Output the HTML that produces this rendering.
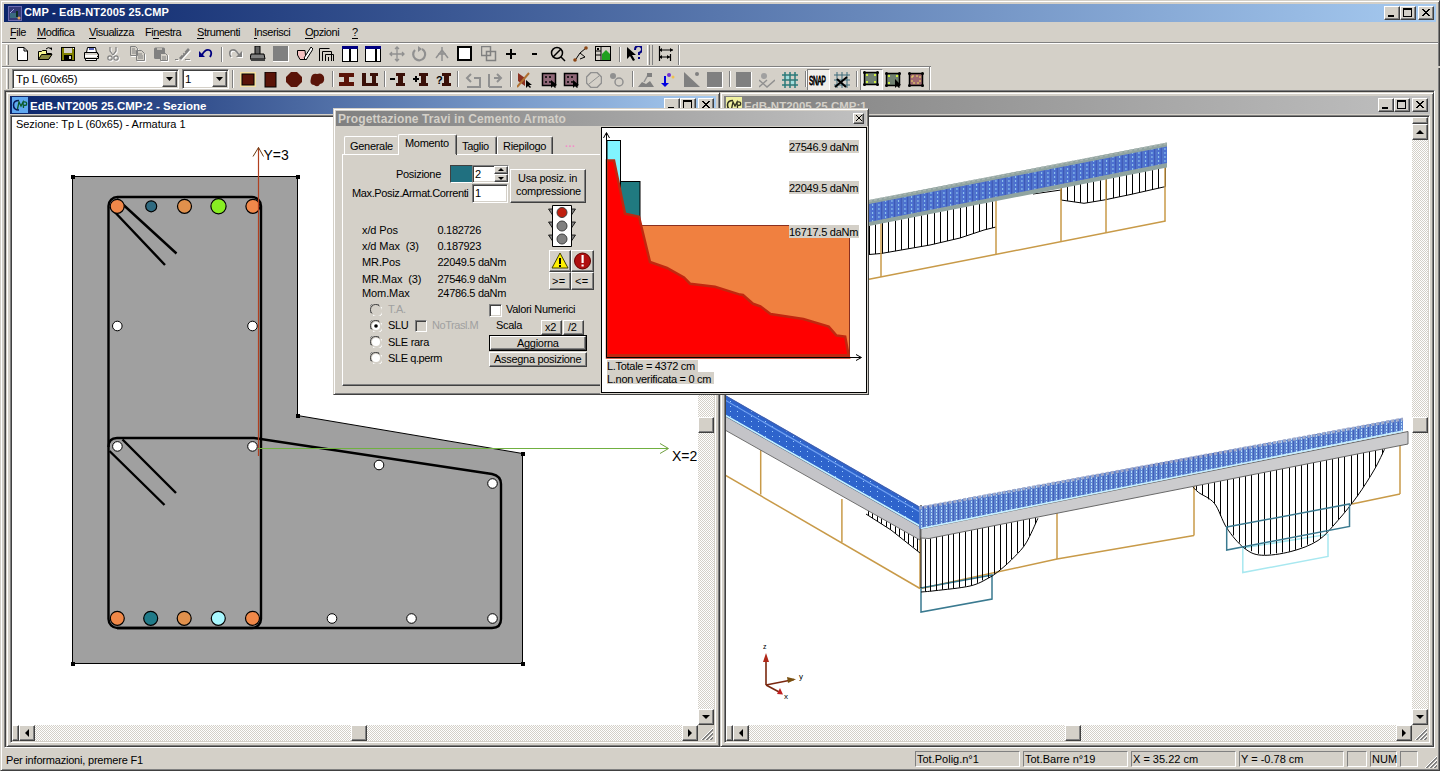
<!DOCTYPE html>
<html><head><meta charset="utf-8">
<style>
*{box-sizing:border-box;margin:0;padding:0}
html,body{width:1440px;height:771px;overflow:hidden;background:#D4D0C8;font-family:"Liberation Sans",sans-serif;font-size:11px;color:#000;position:relative}
.a{position:absolute;display:block}
.t{position:absolute;white-space:nowrap;line-height:13px;font-size:11px;letter-spacing:-0.2px}
.rb{background:#D4D0C8;border:1px solid;border-color:#fff #404040 #404040 #fff;box-shadow:inset -1px -1px #808080}
.rbp{background:#D4D0C8;border:1px solid;border-color:#D4D0C8 #404040 #404040 #D4D0C8;box-shadow:inset 1px 1px #fff,inset -1px -1px #808080}
.sk{border:1px solid;border-color:#808080 #fff #fff #808080;box-shadow:inset 1px 1px #404040,inset -1px -1px #D4D0C8}
.chk{background-image:repeating-conic-gradient(#D4D0C8 0 25%,#fff 0 50%);background-size:2px 2px}
.tb{background:linear-gradient(to right,#0A246A,#A6CAF0)}
.ti{background:linear-gradient(to right,#808080,#C0C0C0)}
u{text-decoration:none;border-bottom:1px solid #000;}
</style></head><body>
<div class="a" style="left:0px;top:0px;width:1440px;height:771px;background:#D4D0C8;border:1px solid;border-color:#D4D0C8 #404040 #404040 #D4D0C8;box-shadow:inset 1px 1px #fff,inset -1px -1px #808080"></div><div class="a" style="left:4px;top:4px;width:1432px;height:18px;background:linear-gradient(to right,#0A246A,#A6CAF0)"></div><svg class="a" style="left:6px;top:5px;" width="16" height="16" viewBox="0 0 16 16"><rect x="2.5" y="1.5" width="13" height="14" fill="#343A78" stroke="#6A6AB0"/><path d="M4 8L8 4" stroke="#A0A0E0"/><rect x="4" y="8" width="8" height="5" fill="#3A6A80"/><path d="M11 6V12" stroke="#103020" stroke-width="2"/><circle cx="13" cy="13" r="1.5" fill="#E0A060"/></svg><div class="t" style="left:24px;top:6px;color:#fff;font-weight:bold;letter-spacing:0.15px">CMP - EdB-NT2005 25.CMP</div><div class="a rb" style="left:1384px;top:6px;width:16px;height:14px;"></div><div class="a" style="left:1388px;top:15px;width:6px;height:2px;background:#000"></div><div class="a rb" style="left:1400px;top:6px;width:16px;height:14px;"></div><svg class="a" style="left:1403px;top:8px;" width="9" height="9" viewBox="0 0 9 9"><rect x="0.5" y="1.5" width="8" height="7" fill="none" stroke="#000"/><rect x="0" y="0" width="9" height="2" fill="#000"/></svg><div class="a rb" style="left:1418px;top:6px;width:16px;height:14px;"></div><svg class="a" style="left:1422px;top:9px;" width="8" height="7" viewBox="0 0 8 7"><g fill="#000" shape-rendering="crispEdges"><rect x="0" y="0" width="1" height="1"/><rect x="1" y="0" width="1" height="1"/><rect x="6" y="0" width="1" height="1"/><rect x="7" y="0" width="1" height="1"/><rect x="1" y="1" width="1" height="1"/><rect x="2" y="1" width="1" height="1"/><rect x="5" y="1" width="1" height="1"/><rect x="6" y="1" width="1" height="1"/><rect x="2" y="2" width="1" height="1"/><rect x="3" y="2" width="1" height="1"/><rect x="4" y="2" width="1" height="1"/><rect x="5" y="2" width="1" height="1"/><rect x="3" y="3" width="1" height="1"/><rect x="4" y="3" width="1" height="1"/><rect x="2" y="4" width="1" height="1"/><rect x="3" y="4" width="1" height="1"/><rect x="4" y="4" width="1" height="1"/><rect x="5" y="4" width="1" height="1"/><rect x="1" y="5" width="1" height="1"/><rect x="2" y="5" width="1" height="1"/><rect x="5" y="5" width="1" height="1"/><rect x="6" y="5" width="1" height="1"/><rect x="0" y="6" width="1" height="1"/><rect x="1" y="6" width="1" height="1"/><rect x="6" y="6" width="1" height="1"/><rect x="7" y="6" width="1" height="1"/></g></svg><div class="t" style="left:10px;top:26px;letter-spacing:-0.45px;line-height:12px"><u>F</u>ile</div><div class="t" style="left:37px;top:26px;letter-spacing:-0.45px;line-height:12px"><u>M</u>odifica</div><div class="t" style="left:89px;top:26px;letter-spacing:-0.45px;line-height:12px"><u>V</u>isualizza</div><div class="t" style="left:145px;top:26px;letter-spacing:-0.45px;line-height:12px">Fi<u>n</u>estra</div><div class="t" style="left:197px;top:26px;letter-spacing:-0.45px;line-height:12px"><u>S</u>trumenti</div><div class="t" style="left:254px;top:26px;letter-spacing:-0.45px;line-height:12px"><u>I</u>nserisci</div><div class="t" style="left:305px;top:26px;letter-spacing:-0.45px;line-height:12px"><u>O</u>pzioni</div><div class="t" style="left:352px;top:26px;letter-spacing:-0.45px;line-height:12px"><u>?</u></div><div class="a" style="left:2px;top:42px;width:1436px;height:1px;background:#808080"></div><div class="a" style="left:2px;top:43px;width:1436px;height:1px;background:#fff"></div><div class="a" style="left:2px;top:66px;width:1436px;height:1px;background:#808080"></div><div class="a" style="left:2px;top:67px;width:1436px;height:1px;background:#fff"></div><div class="a" style="left:6px;top:45px;width:1px;height:20px;background:#fff"></div><div class="a" style="left:8px;top:45px;width:1px;height:20px;background:#808080"></div><div class="a" style="left:221px;top:47px;width:1px;height:15px;background:#808080"></div><div class="a" style="left:222px;top:47px;width:1px;height:15px;background:#fff"></div><div class="a" style="left:619px;top:47px;width:1px;height:15px;background:#808080"></div><div class="a" style="left:620px;top:47px;width:1px;height:15px;background:#fff"></div><div class="a" style="left:647px;top:45px;width:1px;height:20px;background:#fff"></div><div class="a" style="left:649px;top:45px;width:1px;height:20px;background:#808080"></div><div class="a" style="left:652px;top:45px;width:1px;height:20px;background:#808080"></div><div class="a" style="left:678px;top:45px;width:1px;height:20px;background:#808080"></div><div class="a" style="left:679px;top:45px;width:1px;height:20px;background:#fff"></div><div class="a" style="left:6px;top:69px;width:1px;height:20px;background:#fff"></div><div class="a" style="left:8px;top:69px;width:1px;height:20px;background:#808080"></div><div class="a" style="left:232px;top:70px;width:1px;height:18px;background:#808080"></div><div class="a" style="left:233px;top:70px;width:1px;height:18px;background:#fff"></div><div class="a" style="left:332px;top:71px;width:1px;height:16px;background:#808080"></div><div class="a" style="left:333px;top:71px;width:1px;height:16px;background:#fff"></div><div class="a" style="left:384px;top:71px;width:1px;height:16px;background:#808080"></div><div class="a" style="left:385px;top:71px;width:1px;height:16px;background:#fff"></div><div class="a" style="left:457px;top:71px;width:1px;height:16px;background:#808080"></div><div class="a" style="left:458px;top:71px;width:1px;height:16px;background:#fff"></div><div class="a" style="left:510px;top:71px;width:1px;height:16px;background:#808080"></div><div class="a" style="left:511px;top:71px;width:1px;height:16px;background:#fff"></div><div class="a" style="left:632px;top:71px;width:1px;height:16px;background:#808080"></div><div class="a" style="left:633px;top:71px;width:1px;height:16px;background:#fff"></div><div class="a" style="left:729px;top:71px;width:1px;height:16px;background:#808080"></div><div class="a" style="left:730px;top:71px;width:1px;height:16px;background:#fff"></div><div class="a" style="left:805px;top:71px;width:1px;height:16px;background:#808080"></div><div class="a" style="left:806px;top:71px;width:1px;height:16px;background:#fff"></div><div class="a" style="left:856px;top:71px;width:1px;height:16px;background:#808080"></div><div class="a" style="left:857px;top:71px;width:1px;height:16px;background:#fff"></div><div class="a" style="left:930px;top:67px;width:1px;height:23px;background:#fff"></div><div class="a" style="left:929px;top:67px;width:1px;height:23px;background:#808080"></div><div class="a" style="left:931px;top:66px;width:510px;height:1px;background:#D4D0C8"></div><div class="a" style="left:931px;top:67px;width:510px;height:1px;background:#D4D0C8"></div><svg class="a" style="left:14px;top:46px;" width="16" height="16" viewBox="0 0 16 16"><path d="M3.5 1.5H10L13.5 5V14.5H3.5Z" fill="#fff" stroke="#000"/><path d="M10 1.5V5H13.5" fill="none" stroke="#000"/></svg><svg class="a" style="left:37px;top:46px;" width="16" height="16" viewBox="0 0 16 16"><path d="M1.5 5.5H4.5L5.5 4.5H9.5V7.5H14.5L11.5 13.5H1.5Z" fill="#F8F890" stroke="#000"/><path d="M4.5 8.5H15L11.5 13.5H1.5Z" fill="#888840" stroke="#000"/><path d="M9 3Q11 0.5 14 2.5" fill="none" stroke="#000"/><path d="M12.5 2L15 1.5V4.5Z" fill="#000"/></svg><svg class="a" style="left:60px;top:46px;" width="16" height="16" viewBox="0 0 16 16"><rect x="1.5" y="1.5" width="13" height="13" fill="#808000" stroke="#000"/><rect x="4" y="2" width="8" height="5" fill="#D4D0C8"/><rect x="4" y="9" width="8" height="5" fill="#000"/><rect x="9" y="10" width="2" height="3" fill="#D4D0C8"/><rect x="13" y="2" width="1" height="1" fill="#fff"/></svg><svg class="a" style="left:83px;top:46px;" width="16" height="16" viewBox="0 0 16 16"><path d="M4.5 1.5H12.5L13.5 6.5H3.5Z" fill="#fff" stroke="#000"/><path d="M6 3H11" stroke="#2030A0" stroke-width="1.5"/><path d="M1.5 6.5H14.5L15.5 9V12.5H1.5Z" fill="#D4D0C8" stroke="#000"/><rect x="2" y="9" width="12" height="2" fill="#fff"/><path d="M2.5 12.5H13.5V14.5H2.5Z" fill="#fff" stroke="#000"/><path d="M14 7L16 9L14 11" fill="none" stroke="#000"/></svg><svg class="a" style="left:105px;top:46px;" width="16" height="16" viewBox="0 0 16 16"><g transform="translate(1,1)" style="--c:#fff"><path d="M5 1V5L8 9M11 1V5L8 9" fill="none" stroke="#FFFFFF" stroke-width="1.2"/><circle cx="5" cy="12" r="2.2" fill="none" stroke="#FFFFFF" stroke-width="1.2"/><circle cx="11" cy="12" r="2.2" fill="none" stroke="#FFFFFF" stroke-width="1.2"/></g><path d="M5 1V5L8 9M11 1V5L8 9" fill="none" stroke="#808080" stroke-width="1.2"/><circle cx="5" cy="12" r="2.2" fill="none" stroke="#808080" stroke-width="1.2"/><circle cx="11" cy="12" r="2.2" fill="none" stroke="#808080" stroke-width="1.2"/></svg><svg class="a" style="left:130px;top:46px;" width="16" height="16" viewBox="0 0 16 16"><g transform="translate(1,1)" style="--c:#fff"><path d="M0.5 0.5H5.5L7.5 2.5V9.5H0.5Z M6.5 4.5H11.5L14.5 7.5V14.5H6.5Z" fill="#D4D0C8" stroke="#FFFFFF"/><path d="M2 3H5M2 5H6M2 7H6M8 8H12M8 10H13M8 12H13" stroke="#FFFFFF"/></g><path d="M0.5 0.5H5.5L7.5 2.5V9.5H0.5Z M6.5 4.5H11.5L14.5 7.5V14.5H6.5Z" fill="#D4D0C8" stroke="#808080"/><path d="M2 3H5M2 5H6M2 7H6M8 8H12M8 10H13M8 12H13" stroke="#808080"/></svg><svg class="a" style="left:153px;top:46px;" width="16" height="16" viewBox="0 0 16 16"><rect x="1" y="1.5" width="11" height="11.5" rx="1.5" fill="#808080"/><path d="M4 3H9" stroke="#D4D0C8" stroke-width="1.5"/><path d="M7.5 7.5H12.5L14.5 9.5V14.5H7.5Z" fill="#D4D0C8" stroke="#808080"/><path d="M9 11H13M9 13H13" stroke="#808080"/><path d="M8 15.5H15.5V9" fill="none" stroke="#fff"/></svg><svg class="a" style="left:175px;top:46px;" width="16" height="16" viewBox="0 0 16 16"><g transform="translate(1,1)" style="--c:#fff"><path d="M4 12L13 2L15 4L6 14Z" fill="#FFFFFF"/><path d="M7 9L8 8M9 7L10 6" stroke="#D4D0C8" stroke-width="1.2"/><path d="M0 13.5H3M10 13.5H15" stroke="#FFFFFF"/></g><path d="M4 12L13 2L15 4L6 14Z" fill="#808080"/><path d="M7 9L8 8M9 7L10 6" stroke="#D4D0C8" stroke-width="1.2"/><path d="M0 13.5H3M10 13.5H15" stroke="#808080"/></svg><svg class="a" style="left:198px;top:46px;" width="16" height="16" viewBox="0 0 16 16"><path d="M4 9Q7 3 11 4Q14 5 13 9L12 11" fill="none" stroke="#000080" stroke-width="1.8"/><path d="M1 5V11H7Z" fill="#000080"/></svg><svg class="a" style="left:227px;top:46px;" width="16" height="16" viewBox="0 0 16 16"><g transform="translate(1,1)" style="--c:#fff"><path d="M12 9Q9 3 5 4Q2 5 3 9L4 11" fill="none" stroke="#FFFFFF" stroke-width="1.6"/><path d="M15 5V11H9Z" fill="#FFFFFF"/></g><path d="M12 9Q9 3 5 4Q2 5 3 9L4 11" fill="none" stroke="#808080" stroke-width="1.6"/><path d="M15 5V11H9Z" fill="#808080"/></svg><svg class="a" style="left:250px;top:46px;" width="16" height="16" viewBox="0 0 16 16"><rect x="5" y="0" width="5" height="9" fill="#606060" stroke="#000"/><path d="M1 8H14L15 13H0Z" fill="#808080" stroke="#000"/><rect x="1" y="13" width="14" height="2" fill="#404040"/></svg><svg class="a" style="left:273px;top:46px;" width="16" height="16" viewBox="0 0 16 16"><rect x="0" y="0" width="16" height="15" fill="#808080"/><path d="M0 15.5H16M15.5 0V16" stroke="#fff"/></svg><svg class="a" style="left:297px;top:46px;" width="16" height="16" viewBox="0 0 16 16"><path d="M0.5 4.5L8 4.5L9 13.5L3 13.5L0.5 9Z" fill="#F4C0C0" stroke="#000"/><path d="M7 12 L14 1 L16 3 L9 14Z" fill="#fff" stroke="#000"/></svg><svg class="a" style="left:319px;top:46px;" width="16" height="16" viewBox="0 0 16 16"><path d="M0.5 15V2.5H10.5M3.5 15V5.5H12.5V15M6.5 15V8.5H14.5V15M9.5 15V11" fill="none" stroke="#000"/></svg><svg class="a" style="left:342px;top:46px;" width="16" height="16" viewBox="0 0 16 16"><rect x="0.5" y="0.5" width="15" height="15" fill="#fff" stroke="#000"/><rect x="0" y="0" width="16" height="3" fill="#000080"/><path d="M8 3V16" stroke="#000" stroke-width="2"/></svg><svg class="a" style="left:365px;top:46px;" width="16" height="16" viewBox="0 0 16 16"><rect x="0.5" y="0.5" width="15" height="15" fill="#fff" stroke="#000"/><rect x="0" y="0" width="16" height="3" fill="#000080"/><path d="M11 3V16" stroke="#000" stroke-width="2"/></svg><svg class="a" style="left:389px;top:46px;" width="16" height="16" viewBox="0 0 16 16"><path d="M8 1V15M1 8H15M6 3L8 1L10 3M6 13L8 15L10 13M3 6L1 8L3 10M13 6L15 8L13 10" fill="none" stroke="#909090" stroke-width="1.3"/></svg><svg class="a" style="left:411px;top:46px;" width="16" height="16" viewBox="0 0 16 16"><path d="M11 3 A6 6 0 1 1 4 4" fill="none" stroke="#909090" stroke-width="2.2"/><path d="M7 0L11 3L7 6" fill="#909090"/></svg><svg class="a" style="left:434px;top:46px;" width="16" height="16" viewBox="0 0 16 16"><path d="M2 12 L8 4 L14 12 M8 1V15 M4 8 L12 8" stroke="#909090" stroke-width="1.5" fill="none"/></svg><svg class="a" style="left:457px;top:46px;" width="16" height="16" viewBox="0 0 16 16"><rect x="1" y="1" width="13" height="13" fill="#fff" stroke="#000" stroke-width="2"/></svg><svg class="a" style="left:481px;top:46px;" width="16" height="16" viewBox="0 0 16 16"><path d="M0.5 0.5H9.5V9.5H0.5Z M5.5 5.5H14.5V14.5H5.5Z" fill="#D4D0C8" stroke="#808080" stroke-width="1.5"/></svg><svg class="a" style="left:504px;top:46px;" width="16" height="16" viewBox="0 0 16 16"><path d="M7 3V13M2 8H12" stroke="#000" stroke-width="2"/></svg><svg class="a" style="left:527px;top:46px;" width="16" height="16" viewBox="0 0 16 16"><path d="M5 8H10" stroke="#000" stroke-width="2"/></svg><svg class="a" style="left:550px;top:46px;" width="16" height="16" viewBox="0 0 16 16"><circle cx="7" cy="7" r="5.5" fill="none" stroke="#000" stroke-width="1.5"/><path d="M3 11L11 3M11 11L15 15" stroke="#000" stroke-width="1.5"/></svg><svg class="a" style="left:573px;top:46px;" width="16" height="16" viewBox="0 0 16 16"><path d="M3 13L7 7L13 2M7 7L12 11L7 13" fill="none" stroke="#000"/><circle cx="2" cy="14" r="1.8" fill="#8B4513"/><circle cx="13" cy="2" r="1.8" fill="#8B4513"/></svg><svg class="a" style="left:595px;top:46px;" width="16" height="16" viewBox="0 0 16 16"><rect x="0.5" y="0.5" width="15" height="14" fill="#D4D0C8" stroke="#000"/><path d="M1 5H6M1 9H6M6 1V15" stroke="#000"/><path d="M7 8L11 4L15 8V14H7Z" fill="#20A020"/><rect x="2" y="2" width="2" height="2" fill="#000"/></svg><svg class="a" style="left:626px;top:46px;" width="16" height="16" viewBox="0 0 16 16"><path d="M1 1V13L4 10L7 15L9 14L6 9L10 9Z" fill="#000"/><path d="M9 4Q9 0 12.5 0Q16 0 16 3.5Q16 6 13 7V9" fill="none" stroke="#000080" stroke-width="2"/><rect x="12" y="11" width="2" height="2" fill="#000080"/></svg><svg class="a" style="left:658px;top:46px;" width="16" height="16" viewBox="0 0 16 16"><path d="M1.5 0V15M12.5 8V15M1 4H15M1 11H12" stroke="#000" stroke-width="1.2"/><path d="M1 4L4 2V6ZM15 4L12 2V6ZM1 11L4 9V13ZM12 11L9 9V13Z" fill="#000"/></svg><div class="a" style="left:807px;top:69px;width:23px;height:22px;background:#F0EEEA;border:1px solid;border-color:#808080 #fff #fff #808080"></div><div class="a" style="left:860px;top:69px;width:23px;height:22px;background:#F0EEEA;border:1px solid;border-color:#808080 #fff #fff #808080"></div><svg class="a" style="left:240px;top:72px;" width="16" height="16" viewBox="0 0 16 16"><rect x="0" y="0" width="16" height="15" fill="#F4E0A0"/><rect x="2" y="2" width="12" height="11" fill="#5A1408" stroke="#000"/></svg><svg class="a" style="left:263px;top:72px;" width="16" height="16" viewBox="0 0 16 16"><rect x="2" y="0" width="11" height="15" fill="#5A1408" stroke="#000"/></svg><svg class="a" style="left:286px;top:72px;" width="16" height="16" viewBox="0 0 16 16"><path d="M5 0H11L16 5V10L11 15H5L0 10V5Z" fill="#5A1408"/></svg><svg class="a" style="left:309px;top:72px;" width="16" height="16" viewBox="0 0 16 16"><path d="M2 6Q3 1 8 2Q13 0 15 5Q16 11 11 12Q9 16 5 13Q0 13 2 6Z" fill="#5A1408"/></svg><svg class="a" style="left:339px;top:72px;" width="16" height="16" viewBox="0 0 16 16"><path d="M0 1H15V5H10V10H15V14H0V10H5V5H0Z" fill="#5A1408"/></svg><svg class="a" style="left:362px;top:72px;" width="16" height="16" viewBox="0 0 16 16"><path d="M0 1H4V11H8V14H0Z" fill="#3A1008"/><path d="M8 1H16V4H14V11H16V14H8V11H10V4H8Z" fill="#3A1008"/></svg><svg class="a" style="left:390px;top:72px;" width="16" height="16" viewBox="0 0 16 16"><path d="M0 7H5" stroke="#000" stroke-width="2"/><path d="M6 1H15V4H13V11H15V14H6V11H8V4H6Z" fill="#3A1008"/></svg><svg class="a" style="left:413px;top:72px;" width="16" height="16" viewBox="0 0 16 16"><path d="M0 7H6M3 4V10" stroke="#000" stroke-width="2"/><path d="M6 1H15V4H13V11H15V14H6V11H8V4H6Z" fill="#3A1008"/></svg><svg class="a" style="left:436px;top:72px;" width="16" height="16" viewBox="0 0 16 16"><text x="0" y="12" font-size="11" font-weight="bold" font-family="Liberation Sans">?</text><path d="M6 1H15V4H13V11H15V14H6V11H8V4H6Z" fill="#3A1008"/></svg><svg class="a" style="left:465px;top:72px;" width="16" height="16" viewBox="0 0 16 16"><path d="M2 15H15V6H9 M6 2L2 6L6 10" fill="none" stroke="#909090" stroke-width="2"/></svg><svg class="a" style="left:488px;top:72px;" width="16" height="16" viewBox="0 0 16 16"><path d="M1 15H14M1 2V15 M6 6H12 M9 2L13 6L9 10" fill="none" stroke="#909090" stroke-width="2"/></svg><svg class="a" style="left:517px;top:72px;" width="16" height="16" viewBox="0 0 16 16"><path d="M1 1L8 6V14L1 9Z" fill="#8B3020"/><path d="M0 15L12 1" stroke="#B07030" stroke-width="2"/><path d="M9 8V16L11 14L13 16L14 15L12 13H15Z" fill="#000"/></svg><svg class="a" style="left:541px;top:72px;" width="16" height="16" viewBox="0 0 16 16"><rect x="1.5" y="1.5" width="13" height="12" fill="#906878" stroke="#000" stroke-width="1.5"/><circle cx="5" cy="5" r="1" fill="#000"/><circle cx="5" cy="10" r="1" fill="#000"/><circle cx="9" cy="5" r="1" fill="#000"/><circle cx="9" cy="10" r="1" fill="#000"/><path d="M10 8V16L12 14L14 16L15 15L13 13H16Z" fill="#000"/></svg><svg class="a" style="left:563px;top:72px;" width="16" height="16" viewBox="0 0 16 16"><rect x="1.5" y="1.5" width="13" height="12" fill="#906878" stroke="#000" stroke-width="1.5"/><circle cx="5" cy="5" r="1" fill="#000"/><circle cx="5" cy="10" r="1" fill="#000"/><circle cx="9" cy="5" r="1" fill="#000"/><circle cx="9" cy="10" r="1" fill="#000"/><path d="M10 8V16L12 14L14 16L15 15L13 13H16Z" fill="#000"/></svg><svg class="a" style="left:586px;top:72px;" width="16" height="16" viewBox="0 0 16 16"><path d="M5 0.5H11L15.5 5V11L11 15.5H5L0.5 11V5Z" fill="none" stroke="#909090" stroke-width="1.5"/><path d="M3 12L13 4" stroke="#909090"/></svg><svg class="a" style="left:609px;top:72px;" width="16" height="16" viewBox="0 0 16 16"><circle cx="4" cy="4" r="3" fill="#909090"/><circle cx="10" cy="10" r="4" fill="none" stroke="#909090" stroke-width="1.5"/></svg><svg class="a" style="left:638px;top:72px;" width="16" height="16" viewBox="0 0 16 16"><path d="M0 15L4 10L8 12L12 9L16 15Z" fill="#808080"/><path d="M6 10L10 3" stroke="#909090" stroke-width="1.5"/><rect x="9" y="1" width="5" height="4" fill="#808080"/></svg><svg class="a" style="left:661px;top:72px;" width="16" height="16" viewBox="0 0 16 16"><path d="M4 4V12" stroke="#0000E0" stroke-width="2"/><path d="M0 11H8L4 15Z" fill="#0000E0"/><circle cx="8" cy="3" r="2" fill="#7030D0"/><circle cx="12" cy="5" r="1.5" fill="#F0C050"/></svg><svg class="a" style="left:684px;top:72px;" width="16" height="16" viewBox="0 0 16 16"><path d="M0 0L16 15H0Z" fill="#808080"/><circle cx="13" cy="2" r="2" fill="#808080"/></svg><svg class="a" style="left:707px;top:72px;" width="16" height="16" viewBox="0 0 16 16"><rect x="0" y="0" width="15" height="15" fill="#808080"/><path d="M0 15.5H16M15.5 0V16" stroke="#fff"/></svg><svg class="a" style="left:736px;top:72px;" width="16" height="16" viewBox="0 0 16 16"><rect x="0" y="0" width="15" height="15" fill="#808080"/><path d="M0 15.5H16M15.5 0V16" stroke="#fff"/></svg><svg class="a" style="left:759px;top:72px;" width="16" height="16" viewBox="0 0 16 16"><circle cx="5" cy="4" r="3" fill="#A0A0A0"/><path d="M0 8L8 15L16 8M0 15L8 8" fill="none" stroke="#909090" stroke-width="1.5"/></svg><svg class="a" style="left:782px;top:72px;" width="16" height="16" viewBox="0 0 16 16"><path d="M3 0V16M8 0V16M13 0V16M0 3H16M0 8H16M0 13H16" stroke="#2A7A7A" stroke-width="1.5"/><rect x="4" y="4" width="3" height="3" fill="#A0E0E0"/><rect x="9" y="9" width="3" height="3" fill="#A0E0E0"/></svg><svg class="a" style="left:834px;top:72px;" width="16" height="16" viewBox="0 0 16 16"><path d="M3 0V16M8 0V16M13 0V16M0 3H16M0 8H16M0 13H16" stroke="#3A6A7A" stroke-width="1"/><path d="M1 15L13 5M3 7L12 15" stroke="#000" stroke-width="2"/></svg><svg class="a" style="left:885px;top:72px;" width="16" height="16" viewBox="0 0 16 16"><rect x="1.5" y="1.5" width="13" height="12" fill="#708070" stroke="#000" stroke-width="1.5"/><rect x="3" y="3" width="2" height="2" fill="#D0F040"/><rect x="11" y="3" width="2" height="2" fill="#D0F040"/><rect x="3" y="10" width="2" height="2" fill="#D0F040"/><circle cx="1.5" cy="1.5" r="1.5"/><circle cx="14.5" cy="1.5" r="1.5"/><circle cx="1.5" cy="13.5" r="1.5"/><path d="M10 7V16L12 14L14 16L15 15L13 13H16Z" fill="#000"/></svg><svg class="a" style="left:908px;top:72px;" width="16" height="16" viewBox="0 0 16 16"><rect x="1.5" y="1.5" width="13" height="12" fill="#A06870" stroke="#000" stroke-width="1.5"/><path d="M4 4H12V11H4Z" fill="none" stroke="#F0E060" stroke-dasharray="2 2"/><circle cx="1.5" cy="1.5" r="1.5"/><circle cx="14.5" cy="1.5" r="1.5"/><circle cx="1.5" cy="13.5" r="1.5"/><circle cx="14.5" cy="13.5" r="1.5"/></svg><svg class="a" style="left:809px;top:72px;" width="20" height="16" viewBox="0 0 20 16"><text x="0" y="13" font-size="13" font-family="Liberation Sans" transform="scale(0.5,1)" letter-spacing="-0.5" stroke="#000" stroke-width="0.8">SNAP</text></svg><svg class="a" style="left:863px;top:71px;" width="16" height="16" viewBox="0 0 16 16"><rect x="1.5" y="1.5" width="13" height="12" fill="#708070" stroke="#000" stroke-width="1.5"/><rect x="3" y="3" width="2" height="2" fill="#D0F040"/><rect x="11" y="3" width="2" height="2" fill="#D0F040"/><rect x="3" y="10" width="2" height="2" fill="#D0F040"/><rect x="11" y="10" width="2" height="2" fill="#D0F040"/><circle cx="1.5" cy="1.5" r="1.5"/><circle cx="14.5" cy="1.5" r="1.5"/><circle cx="1.5" cy="13.5" r="1.5"/><circle cx="14.5" cy="13.5" r="1.5"/></svg><div class="a sk" style="left:12px;top:69px;width:167px;height:20px;background:#fff"></div><div class="a rb" style="left:162px;top:71px;width:15px;height:16px;"></div><svg class="a" style="left:166px;top:77px;" width="7" height="4" viewBox="0 0 7 4"><path d="M0 0H7L3.5 4Z" fill="#000"/></svg><div class="t" style="left:16px;top:73px;font-size:11.5px;letter-spacing:-0.3px">Tp L (60x65)</div><div class="a sk" style="left:182px;top:69px;width:47px;height:20px;background:#fff"></div><div class="a rb" style="left:212px;top:71px;width:15px;height:16px;"></div><svg class="a" style="left:216px;top:77px;" width="7" height="4" viewBox="0 0 7 4"><path d="M0 0H7L3.5 4Z" fill="#000"/></svg><div class="t" style="left:185px;top:73px;font-size:11.5px">1</div><div class="a" style="left:4px;top:90px;width:1431px;height:658px;border:1px solid;border-color:#808080 #fff #fff #808080;box-shadow:inset 1px 1px #404040"></div><div class="a" style="left:6px;top:92px;width:714px;height:655px;background:#D4D0C8;border:1px solid;border-color:#D4D0C8 #404040 #404040 #D4D0C8;box-shadow:inset 1px 1px #fff,inset -1px -1px #808080"></div><div class="a" style="left:10px;top:96px;width:706px;height:18px;background:linear-gradient(to right,#0A246A,#A6CAF0)"></div><div class="a" style="left:10px;top:115px;width:706px;height:628px;border:1px solid;border-color:#808080 #fff #fff #808080;box-shadow:inset 1px 1px #404040,inset -1px -1px #D4D0C8;background:#fff"></div><div class="a rb" style="left:698px;top:98px;width:16px;height:14px;"></div><svg class="a" style="left:702px;top:101px;" width="8" height="7" viewBox="0 0 8 7"><g fill="#000" shape-rendering="crispEdges"><rect x="0" y="0" width="1" height="1"/><rect x="1" y="0" width="1" height="1"/><rect x="6" y="0" width="1" height="1"/><rect x="7" y="0" width="1" height="1"/><rect x="1" y="1" width="1" height="1"/><rect x="2" y="1" width="1" height="1"/><rect x="5" y="1" width="1" height="1"/><rect x="6" y="1" width="1" height="1"/><rect x="2" y="2" width="1" height="1"/><rect x="3" y="2" width="1" height="1"/><rect x="4" y="2" width="1" height="1"/><rect x="5" y="2" width="1" height="1"/><rect x="3" y="3" width="1" height="1"/><rect x="4" y="3" width="1" height="1"/><rect x="2" y="4" width="1" height="1"/><rect x="3" y="4" width="1" height="1"/><rect x="4" y="4" width="1" height="1"/><rect x="5" y="4" width="1" height="1"/><rect x="1" y="5" width="1" height="1"/><rect x="2" y="5" width="1" height="1"/><rect x="5" y="5" width="1" height="1"/><rect x="6" y="5" width="1" height="1"/><rect x="0" y="6" width="1" height="1"/><rect x="1" y="6" width="1" height="1"/><rect x="6" y="6" width="1" height="1"/><rect x="7" y="6" width="1" height="1"/></g></svg><div class="a rb" style="left:680px;top:98px;width:16px;height:14px;"></div><svg class="a" style="left:683px;top:100px;" width="9" height="9" viewBox="0 0 9 9"><rect x="0.5" y="1.5" width="8" height="7" fill="none" stroke="#000"/><rect x="0" y="0" width="9" height="2" fill="#000"/></svg><div class="a rb" style="left:664px;top:98px;width:16px;height:14px;"></div><div class="a" style="left:668px;top:107px;width:6px;height:2px;background:#000"></div><div class="a" style="left:720px;top:92px;width:714px;height:655px;background:#D4D0C8;border:1px solid;border-color:#D4D0C8 #404040 #404040 #D4D0C8;box-shadow:inset 1px 1px #fff,inset -1px -1px #808080"></div><div class="a" style="left:724px;top:96px;width:706px;height:18px;background:linear-gradient(to right,#808080,#C0C0C0)"></div><div class="a" style="left:724px;top:115px;width:706px;height:628px;border:1px solid;border-color:#808080 #fff #fff #808080;box-shadow:inset 1px 1px #404040,inset -1px -1px #D4D0C8;background:#fff"></div><div class="a rb" style="left:1412px;top:98px;width:16px;height:14px;"></div><svg class="a" style="left:1416px;top:101px;" width="8" height="7" viewBox="0 0 8 7"><g fill="#000" shape-rendering="crispEdges"><rect x="0" y="0" width="1" height="1"/><rect x="1" y="0" width="1" height="1"/><rect x="6" y="0" width="1" height="1"/><rect x="7" y="0" width="1" height="1"/><rect x="1" y="1" width="1" height="1"/><rect x="2" y="1" width="1" height="1"/><rect x="5" y="1" width="1" height="1"/><rect x="6" y="1" width="1" height="1"/><rect x="2" y="2" width="1" height="1"/><rect x="3" y="2" width="1" height="1"/><rect x="4" y="2" width="1" height="1"/><rect x="5" y="2" width="1" height="1"/><rect x="3" y="3" width="1" height="1"/><rect x="4" y="3" width="1" height="1"/><rect x="2" y="4" width="1" height="1"/><rect x="3" y="4" width="1" height="1"/><rect x="4" y="4" width="1" height="1"/><rect x="5" y="4" width="1" height="1"/><rect x="1" y="5" width="1" height="1"/><rect x="2" y="5" width="1" height="1"/><rect x="5" y="5" width="1" height="1"/><rect x="6" y="5" width="1" height="1"/><rect x="0" y="6" width="1" height="1"/><rect x="1" y="6" width="1" height="1"/><rect x="6" y="6" width="1" height="1"/><rect x="7" y="6" width="1" height="1"/></g></svg><div class="a rb" style="left:1394px;top:98px;width:16px;height:14px;"></div><svg class="a" style="left:1397px;top:100px;" width="9" height="9" viewBox="0 0 9 9"><rect x="0.5" y="1.5" width="8" height="7" fill="none" stroke="#000"/><rect x="0" y="0" width="9" height="2" fill="#000"/></svg><div class="a rb" style="left:1378px;top:98px;width:16px;height:14px;"></div><div class="a" style="left:1382px;top:107px;width:6px;height:2px;background:#000"></div><div class="a" style="left:12px;top:97px;width:16px;height:16px;background:#60A8F0"></div><svg class="a" style="left:12px;top:97px;" width="16" height="16" viewBox="0 0 16 16"><path d="M7 3.5 Q1.5 3.5 1.5 8 Q1.5 13 7 13" fill="none" stroke="#0a1a5a" stroke-width="1.5"/><path d="M5.5 12 L7 5 L9 9 L11 5 L11.5 11 M11 5 Q15.5 4 14.5 8 L12 8.5" fill="none" stroke="#0a5a2a" stroke-width="1.3"/></svg><div class="t" style="left:30px;top:100px;color:#fff;font-weight:bold;font-size:11.5px;letter-spacing:0px">EdB-NT2005 25.CMP:2 - Sezione</div><div class="a" style="left:726px;top:97px;width:16px;height:16px;background:#F0F0A0"></div><svg class="a" style="left:726px;top:97px;" width="16" height="16" viewBox="0 0 16 16"><path d="M7 3.5 Q1.5 3.5 1.5 8 Q1.5 13 7 13" fill="none" stroke="#303020" stroke-width="1.5"/><path d="M5.5 12 L7 5 L9 9 L11 5 L11.5 11 M11 5 Q15.5 4 14.5 8 L12 8.5" fill="none" stroke="#303020" stroke-width="1.3"/></svg><div class="t" style="left:744px;top:100px;color:#D4D0C8;font-weight:bold;font-size:11.5px;letter-spacing:0px">EdB-NT2005 25.CMP:1</div><div class="a" style="left:698px;top:117px;width:16px;height:608px;background:#E4E2DC"></div><div class="a chk" style="left:698px;top:117px;width:16px;height:608px"></div><div class="a rb" style="left:698px;top:117px;width:16px;height:16px;"></div><svg class="a" style="left:702px;top:123px;" width="8" height="4" viewBox="0 0 8 4"><path d="M0 4 L4 0 L8 4Z" fill="#000"/></svg><div class="a rb" style="left:698px;top:709px;width:16px;height:16px;"></div><svg class="a" style="left:702px;top:715px;" width="8" height="4" viewBox="0 0 8 4"><path d="M0 0 L8 0 L4 4Z" fill="#000"/></svg><div class="a rb" style="left:698px;top:417px;width:16px;height:16px;"></div><div class="a chk" style="left:12px;top:725px;width:686px;height:16px"></div><div class="a rb" style="left:12px;top:725px;width:7px;height:16px;"></div><div class="a rb" style="left:19px;top:725px;width:16px;height:16px;"></div><svg class="a" style="left:25px;top:729px;" width="4" height="8" viewBox="0 0 4 8"><path d="M4 0 L0 4 L4 8Z" fill="#000"/></svg><div class="a rb" style="left:682px;top:725px;width:16px;height:16px;"></div><svg class="a" style="left:688px;top:729px;" width="4" height="8" viewBox="0 0 4 8"><path d="M0 0 L4 4 L0 8Z" fill="#000"/></svg><div class="a rb" style="left:351px;top:725px;width:16px;height:16px;"></div><div class="a" style="left:698px;top:725px;width:16px;height:16px;background:#D4D0C8"></div><svg class="a" style="left:698px;top:725px;" width="16" height="16" viewBox="0 0 16 16"><path d="M15 3 L3 15 M15 7 L7 15 M15 11 L11 15" stroke="#fff" stroke-width="1"/><path d="M15 4 L4 15 M15 5 L5 15 M15 8 L8 15 M15 9 L9 15 M15 12 L12 15 M15 13 L13 15" stroke="#808080" stroke-width="1"/></svg><div class="a" style="left:1412px;top:117px;width:16px;height:608px;background:#E4E2DC"></div><div class="a chk" style="left:1412px;top:117px;width:16px;height:608px"></div><div class="a rb" style="left:1412px;top:117px;width:16px;height:7px;"></div><div class="a rb" style="left:1412px;top:124px;width:16px;height:16px;"></div><svg class="a" style="left:1416px;top:130px;" width="8" height="4" viewBox="0 0 8 4"><path d="M0 4 L4 0 L8 4Z" fill="#000"/></svg><div class="a rb" style="left:1412px;top:709px;width:16px;height:16px;"></div><svg class="a" style="left:1416px;top:715px;" width="8" height="4" viewBox="0 0 8 4"><path d="M0 0 L8 0 L4 4Z" fill="#000"/></svg><div class="a rb" style="left:1412px;top:417px;width:16px;height:16px;"></div><div class="a chk" style="left:726px;top:725px;width:686px;height:16px"></div><div class="a rb" style="left:726px;top:725px;width:7px;height:16px;"></div><div class="a rb" style="left:733px;top:725px;width:16px;height:16px;"></div><svg class="a" style="left:739px;top:729px;" width="4" height="8" viewBox="0 0 4 8"><path d="M4 0 L0 4 L4 8Z" fill="#000"/></svg><div class="a rb" style="left:1396px;top:725px;width:16px;height:16px;"></div><svg class="a" style="left:1402px;top:729px;" width="4" height="8" viewBox="0 0 4 8"><path d="M0 0 L4 4 L0 8Z" fill="#000"/></svg><div class="a rb" style="left:1065px;top:725px;width:16px;height:16px;"></div><div class="a" style="left:1412px;top:725px;width:16px;height:16px;background:#D4D0C8"></div><svg class="a" style="left:1412px;top:725px;" width="16" height="16" viewBox="0 0 16 16"><path d="M15 3 L3 15 M15 7 L7 15 M15 11 L11 15" stroke="#fff" stroke-width="1"/><path d="M15 4 L4 15 M15 5 L5 15 M15 8 L8 15 M15 9 L9 15 M15 12 L12 15 M15 13 L13 15" stroke="#808080" stroke-width="1"/></svg><div class="t" style="left:6px;top:754px;letter-spacing:-0.2px">Per informazioni, premere F1</div><div class="a" style="left:915px;top:751px;width:105px;height:16px;border:1px solid;border-color:#808080 #fff #fff #808080"></div><div class="t" style="left:917px;top:753px;letter-spacing:0px">Tot.Polig.n°1</div><div class="a" style="left:1023px;top:751px;width:105px;height:16px;border:1px solid;border-color:#808080 #fff #fff #808080"></div><div class="t" style="left:1025px;top:753px;letter-spacing:0px">Tot.Barre n°19</div><div class="a" style="left:1131px;top:751px;width:105px;height:16px;border:1px solid;border-color:#808080 #fff #fff #808080"></div><div class="t" style="left:1133px;top:753px;letter-spacing:0px">X = 35.22 cm</div><div class="a" style="left:1239px;top:751px;width:105px;height:16px;border:1px solid;border-color:#808080 #fff #fff #808080"></div><div class="t" style="left:1241px;top:753px;letter-spacing:0px">Y = -0.78 cm</div><div class="a" style="left:1347px;top:751px;width:20px;height:16px;border:1px solid;border-color:#808080 #fff #fff #808080"></div><div class="a" style="left:1370px;top:751px;width:27px;height:16px;border:1px solid;border-color:#808080 #fff #fff #808080"></div><div class="t" style="left:1372px;top:753px;letter-spacing:0px">NUM</div><div class="a" style="left:1400px;top:751px;width:18px;height:16px;border:1px solid;border-color:#808080 #fff #fff #808080"></div><svg class="a" style="left:1422px;top:753px;" width="16" height="16" viewBox="0 0 16 16"><path d="M15 3 L3 15 M15 7 L7 15 M15 11 L11 15" stroke="#fff" stroke-width="1"/><path d="M15 4 L4 15 M15 5 L5 15 M15 8 L8 15 M15 9 L9 15 M15 12 L12 15 M15 13 L13 15" stroke="#808080" stroke-width="1"/></svg><svg class="a" style="left:12px;top:117px;" width="686" height="608" viewBox="12 117 686 608"><path d="M72.5 176.5H297.5V415.5L522.5 453.5V663.5H72.5Z" fill="#A0A0A0" stroke="#000" stroke-width="1"/><rect x="71" y="175" width="4" height="4" fill="#000"/><rect x="296" y="175" width="4" height="4" fill="#000"/><rect x="296" y="414" width="4" height="4" fill="#000"/><rect x="521" y="452" width="4" height="4" fill="#000"/><rect x="521" y="662" width="4" height="4" fill="#000"/><rect x="71" y="662" width="4" height="4" fill="#000"/><rect x="108.5" y="197" width="152.5" height="431" rx="9" fill="none" stroke="#000" stroke-width="2.4"/><path d="M117 199L176.5 253.5M110 207L165 265" stroke="#000" stroke-width="2.4"/><path d="M108.5 447Q108.5 438 117 438H254L492 474Q501 476 501 484V619Q501 628 492 628H117" fill="none" stroke="#000" stroke-width="2.4"/><path d="M122.5 439.5L176 493M109.5 451L164.5 505" stroke="#000" stroke-width="2.4"/><circle cx="117.2" cy="206.3" r="7" fill="#F0884A" stroke="#000" stroke-width="1.2"/><circle cx="151.2" cy="206.3" r="5.5" fill="#2F6A80" stroke="#000" stroke-width="1.2"/><circle cx="184.5" cy="206.3" r="7" fill="#E0904C" stroke="#000" stroke-width="1.2"/><circle cx="218.5" cy="206.3" r="7.6" fill="#88EE22" stroke="#000" stroke-width="1.2"/><circle cx="252.9" cy="206.3" r="7" fill="#F0884A" stroke="#000" stroke-width="1.2"/><circle cx="117.3" cy="618.3" r="7" fill="#F08848" stroke="#000" stroke-width="1.2"/><circle cx="150.7" cy="618.3" r="7" fill="#207A88" stroke="#000" stroke-width="1.2"/><circle cx="184.2" cy="618.3" r="7" fill="#E0904C" stroke="#000" stroke-width="1.2"/><circle cx="218.3" cy="618.3" r="7" fill="#A8F8FF" stroke="#000" stroke-width="1.2"/><circle cx="252.5" cy="618.3" r="7" fill="#F08848" stroke="#000" stroke-width="1.2"/><circle cx="117.3" cy="326" r="4.8" fill="#fff" stroke="#000" stroke-width="1"/><circle cx="252.5" cy="326" r="4.8" fill="#fff" stroke="#000" stroke-width="1"/><circle cx="117.4" cy="446.4" r="4.8" fill="#fff" stroke="#000" stroke-width="1"/><circle cx="252.5" cy="446.4" r="4.8" fill="#fff" stroke="#000" stroke-width="1"/><circle cx="379" cy="465" r="4.8" fill="#fff" stroke="#000" stroke-width="1"/><circle cx="492.5" cy="483.5" r="4.8" fill="#fff" stroke="#000" stroke-width="1"/><circle cx="332" cy="618.5" r="4.8" fill="#fff" stroke="#000" stroke-width="1"/><circle cx="411.5" cy="618.5" r="4.8" fill="#fff" stroke="#000" stroke-width="1"/><circle cx="492.5" cy="618.5" r="4.8" fill="#fff" stroke="#000" stroke-width="1"/><path d="M258.5 147.5V456" stroke="#B04020" stroke-width="1.2"/><path d="M253 156.5L258.5 147.5L263.5 156.5" fill="none" stroke="#6A3A10" stroke-width="1"/><path d="M258 448.5H668" stroke="#70B040" stroke-width="1.2"/><path d="M660 443.5L668.5 448.5L660 453.5" fill="none" stroke="#70A040" stroke-width="1"/><text x="263.5" y="160" font-family="Liberation Sans" font-size="14">Y=3</text><text x="672" y="461" font-family="Liberation Sans" font-size="14">X=2</text></svg><div class="t" style="left:16px;top:118px;letter-spacing:-0.05px">Sezione: Tp L (60x65) - Armatura 1</div><svg class="a" style="left:726px;top:117px;" width="686" height="608" viewBox="726 117 686 608"><defs><pattern id="bp" patternUnits="userSpaceOnUse" width="6.5" height="4"><rect width="6.5" height="4" fill="#4C70D0"/><rect x="1" width="1" height="2" fill="#98D0F0"/><rect x="4" width="1" height="4" fill="#3048A8"/><rect x="5" width="1" height="4" fill="#5A7CC8"/></pattern><pattern id="bp2" patternUnits="userSpaceOnUse" width="5" height="3"><rect width="5" height="3" fill="#5C84D0"/><rect x="1" width="1" height="2" fill="#B4DAF8"/><rect x="3" width="1" height="3" fill="#4660B8"/></pattern><pattern id="bp3" patternUnits="userSpaceOnUse" width="7" height="5"><rect width="7" height="5" fill="#2E64CC"/><rect x="2" y="1" width="1" height="1" fill="#A0D0FF"/></pattern></defs><path d="M869.5 225.6V254.5M875.5 224.3V254.0M882.5 223.0V253.3M888.5 221.7V252.2M895.5 220.5V251.1M901.5 219.2V249.9M908.5 217.9V248.8M914.5 216.6V247.7M921.5 215.3V246.6M927.5 214.0V245.4M934.5 212.8V244.1M940.5 211.5V242.6M947.5 210.2V241.0M953.5 208.9V239.5M960.5 207.6V238.0M966.5 206.3V235.8M973.5 205.0V233.7M979.5 203.8V231.5M986.5 202.5V229.5M992.5 201.2V227.9" stroke="#000" stroke-width="1" fill="none"/><polyline points="869.0,254.5 881.0,253.5 930.0,245.0 960.0,238.0 984.0,230.0 996.0,227.0" fill="none" stroke="#000"/><path d="M1061.5 187.7V200.0M1067.5 186.4V200.9M1074.5 185.1V201.9M1080.5 183.8V202.8M1087.5 182.5V202.8M1093.5 181.2V201.7M1100.5 179.9V200.7M1106.5 178.7V199.5M1113.5 177.4V198.1M1119.5 176.1V196.8M1126.5 174.8V195.4M1132.5 173.5V194.1M1139.5 172.2V192.6M1145.5 170.9V191.1M1152.5 169.7V189.6M1158.5 168.4V188.2M1165.5 167.1V186.7" stroke="#000" stroke-width="1" fill="none"/><polyline points="1033.0,194.0 1061.0,190.0 1061.0,200.0 1084.0,203.3 1104.0,200.0 1131.0,194.4 1165.0,186.7" fill="none" stroke="#000"/><path d="M869 279.3L1165.6 221.1" stroke="#C89A48" stroke-width="1.5"/><path d="M881 223.2V276.9" stroke="#C89A48" stroke-width="1.5"/><path d="M996 200.5V254.4" stroke="#C89A48" stroke-width="1.5"/><path d="M1061 187.6V241.6" stroke="#C89A48" stroke-width="1.5"/><path d="M1106 178.7V232.8" stroke="#C89A48" stroke-width="1.5"/><path d="M1165 167.1V221.2" stroke="#C89A48" stroke-width="1.5"/><polygon points="869.0,200.0 1167.0,142.5 1167.0,167.5 869.0,226.0" fill="#90A4A0"/><polygon points="869.0,204.0 1167.0,146.5 1167.0,163.0 869.0,222.0" fill="url(#bp)"/><path d="M869 201L1167 143.5" stroke="#A8B4B0" stroke-width="2" stroke-dasharray="3 2"/><path d="M725 475L920 588.5" stroke="#C89A48" stroke-width="1.5"/><path d="M760.7 449.7V494.5" stroke="#C89A48" stroke-width="1.5"/><path d="M841.9 499V542.2" stroke="#C89A48" stroke-width="1.5"/><path d="M920 536V588.5" stroke="#C89A48" stroke-width="1.5"/><path d="M868.5 509.2V515.3M872.5 511.9V518.2M877.5 514.5V521.0M881.5 517.2V523.9M886.5 519.9V526.8M890.5 522.5V529.7M895.5 525.2V533.2M899.5 527.9V536.7M904.5 530.5V540.3M908.5 533.2V543.9M913.5 535.9V547.4M917.5 538.5V551.0" stroke="#000" stroke-width="1" fill="none"/><polyline points="866.0,514.0 891.0,530.0 920.0,553.0" fill="none" stroke="#000"/><polygon points="725.0,416.0 920.0,527.0 920.0,540.0 725.0,430.0" fill="#C4C4C8" stroke="#707070"/><polygon points="725.0,395.0 920.0,507.0 920.0,527.0 725.0,416.0" fill="url(#bp3)"/><path d="M725 415L920 526" stroke="#C8F4FF" stroke-width="1.6"/><path d="M725 395.5L920 507.5" stroke="#4060B0" stroke-width="1.2"/><path d="M725 400L920 512" stroke="#70A0F0" stroke-width="1.2"/><polyline points="921.0,588.5 1057.0,559.0 1194.0,535.4" fill="none" stroke="#C89A48" stroke-width="1.5"/><polyline points="1352.0,504.0 1400.0,494.0" fill="none" stroke="#C89A48" stroke-width="1.5"/><path d="M1057 512V559" stroke="#C89A48" stroke-width="1.5"/><path d="M1194 485V535.4" stroke="#C89A48" stroke-width="1.5"/><path d="M1400 443V494" stroke="#C89A48" stroke-width="1.5"/><polygon points="921.0,588.0 992.0,575.0 992.0,599.0 921.0,612.0" fill="none" stroke="#3A7A90" stroke-width="1.5"/><polygon points="1242.8,548.0 1328.0,534.3 1328.0,556.5 1242.8,572.5" fill="none" stroke="#A8E8F0" stroke-width="1.5"/><path d="M925.5 539.2V591.6M930.5 538.1V591.1M936.5 536.9V590.5M942.5 535.8V589.7M948.5 534.6V588.9M953.5 533.5V588.1M959.5 532.3V587.4M965.5 531.2V586.6M971.5 530.0V585.4M977.5 528.9V582.9M982.5 527.7V580.4M988.5 526.6V577.9M994.5 525.4V573.8M1000.5 524.3V569.8M1006.5 523.1V564.4M1011.5 522.0V559.1M1017.5 520.8V552.9M1023.5 519.7V545.9M1029.5 518.5V536.1M1035.5 517.4V524.0" stroke="#000" stroke-width="1" fill="none"/><path d="M921.0 592.0C923.3 591.8 926.8 591.7 935.0 590.7C943.2 589.7 961.0 588.1 970.0 586.0C979.0 583.9 983.7 580.6 988.8 577.9C993.9 575.2 996.2 573.2 1000.5 569.7C1004.8 566.2 1010.2 561.3 1014.5 556.8C1018.8 552.3 1022.3 549.2 1026.2 542.8C1030.1 536.4 1036.0 522.4 1037.9 518.3" fill="none" stroke="#000"/><path d="M1196.5 485.5V489.9M1202.5 484.3V495.0M1208.5 483.1V499.3M1214.5 481.8V503.7M1220.5 480.6V516.0M1227.5 479.4V528.2M1233.5 478.1V535.4M1239.5 476.9V542.6M1245.5 475.7V548.6M1251.5 474.5V551.2M1258.5 473.2V553.8M1264.5 472.0V554.8M1270.5 470.8V554.1M1276.5 469.5V553.3M1282.5 468.3V552.5M1289.5 467.1V551.7M1295.5 465.9V549.8M1301.5 464.6V547.2M1307.5 463.4V544.7M1313.5 462.2V542.2M1320.5 460.9V538.5M1326.5 459.7V532.3M1332.5 458.5V526.0M1338.5 457.3V519.6M1344.5 456.0V511.8M1351.5 454.8V504.0M1357.5 453.6V496.3M1363.5 452.3V486.6M1369.5 451.1V477.0M1375.5 449.9V466.8M1382.5 448.7V454.3" stroke="#000" stroke-width="1" fill="none"/><path d="M1192.3 486.2C1193.3 487.2 1194.8 489.5 1198.5 492.4C1202.2 495.3 1209.8 497.6 1214.5 503.5C1219.2 509.4 1221.9 520.6 1226.8 528.0C1231.7 535.4 1238.2 543.4 1244.0 547.9C1249.8 552.4 1253.5 554.6 1261.3 555.2C1269.1 555.8 1281.5 554.0 1290.9 551.5C1300.4 549.0 1310.2 545.6 1318.0 540.5C1325.8 535.4 1331.1 528.1 1337.7 520.7C1344.3 513.3 1351.2 504.6 1357.4 496.0C1363.6 487.4 1370.2 476.8 1374.7 469.0C1379.2 461.2 1382.9 452.6 1384.5 449.3" fill="none" stroke="#000"/><polygon points="1226.7,527.0 1349.5,504.0 1349.5,526.4 1226.7,550.0" fill="none" stroke="#3A7A90" stroke-width="1.5"/><path d="M921 505V588" stroke="#000" stroke-width="1"/><polygon points="921.0,529.0 1408.0,431.5 1408.0,444.0 929.0,538.5 921.0,538.0" fill="#CCCCCE" stroke="#686868" stroke-width="1"/><polygon points="919.0,507.0 1403.0,418.0 1403.0,431.5 919.0,529.0" fill="url(#bp2)"/><path d="M919 508L1403 419" stroke="#A0A8C8" stroke-width="3" stroke-dasharray="3 2"/><path d="M921 528.5L1403 431" stroke="#C8F0FF" stroke-width="1.6"/><path d="M766 685V656M766 685L794 679.5M766 685L781 693" stroke="#7A2810" stroke-width="1.6"/><path d="M763 662L766 653L769 662Z" fill="#B02818"/><path d="M787 677L796 679.3L788 683Z" fill="#7A5010"/><path d="M777 694L783 694.5L780 688Z" fill="#C02020"/><text x="763" y="649" font-size="7" font-family="Liberation Sans">z</text><text x="799" y="679" font-size="8" font-family="Liberation Sans">y</text><text x="784" y="699" font-size="8" font-family="Liberation Sans">x</text></svg><div class="a" style="left:333px;top:108px;width:536px;height:287px;background:#D4D0C8;border:1px solid;border-color:#D4D0C8 #404040 #404040 #D4D0C8;box-shadow:inset 1px 1px #fff,inset -1px -1px #808080"></div><div class="a" style="left:336px;top:111px;width:530px;height:15px;background:linear-gradient(to right,#808080,#C0C0C0)"></div><div class="t" style="left:338px;top:113px;color:#D4D0C8;font-weight:bold;font-size:12px;letter-spacing:0.1px">Progettazione Travi in Cemento Armato</div><div class="a rb" style="left:853px;top:113px;width:11px;height:11px;"></div><svg class="a" style="left:856px;top:115px;" width="6" height="6" viewBox="0 0 6 6"><g fill="#000" shape-rendering="crispEdges"><rect x="0" y="0" width="1" height="1"/><rect x="5" y="0" width="1" height="1"/><rect x="1" y="1" width="1" height="1"/><rect x="4" y="1" width="1" height="1"/><rect x="2" y="2" width="1" height="1"/><rect x="3" y="2" width="1" height="1"/><rect x="2" y="3" width="1" height="1"/><rect x="3" y="3" width="1" height="1"/><rect x="1" y="4" width="1" height="1"/><rect x="4" y="4" width="1" height="1"/><rect x="0" y="5" width="1" height="1"/><rect x="5" y="5" width="1" height="1"/></g></svg><div class="a" style="left:342px;top:154px;width:270px;height:232px;border:1px solid;border-color:#fff #404040 #404040 #fff;box-shadow:inset -1px -1px #808080"></div><div class="a" style="left:344px;top:136px;width:54px;height:18px;background:#D4D0C8;border:1px solid;border-bottom:none;border-color:#fff #D4D0C8 #404040 #fff;box-shadow:none;border-radius:2px 2px 0 0"></div><div class="t" style="left:350px;top:140px;letter-spacing:-0.3px">Generale</div><div class="a" style="left:456px;top:136px;width:41px;height:18px;background:#D4D0C8;border:1px solid;border-bottom:none;border-color:#fff #404040 #404040 #fff;box-shadow:inset -1px 0 #808080;border-radius:2px 2px 0 0"></div><div class="t" style="left:462px;top:140px;letter-spacing:-0.3px">Taglio</div><div class="a" style="left:497px;top:136px;width:56px;height:18px;background:#D4D0C8;border:1px solid;border-bottom:none;border-color:#fff #404040 #404040 #fff;box-shadow:inset -1px 0 #808080;border-radius:2px 2px 0 0"></div><div class="t" style="left:503px;top:140px;letter-spacing:-0.3px">Riepilogo</div><div class="a" style="left:398px;top:134px;width:59px;height:21px;background:#D4D0C8;border:1px solid;border-bottom:none;border-color:#fff #404040 #404040 #fff;box-shadow:inset -1px 0 #808080;border-radius:2px 2px 0 0"></div><div class="t" style="left:405px;top:137px;letter-spacing:-0.3px">Momento</div><div class="a" style="left:399px;top:154px;width:57px;height:2px;background:#D4D0C8"></div><div class="t" style="left:565px;top:140px;color:#F090C8;font-size:11px;font-weight:bold">···</div><div class="t" style="left:396px;top:168px;letter-spacing:-0.3px">Posizione</div><div class="a" style="left:450px;top:165px;width:23px;height:18px;background:#207080;border:1px solid;border-color:#404040 #fff #fff #404040"></div><div class="a sk" style="left:472px;top:165px;width:37px;height:18px;background:#fff"></div><div class="t" style="left:475px;top:168px;">2</div><div class="a rb" style="left:494px;top:166px;width:14px;height:8px;"></div><svg class="a" style="left:498px;top:168px;" width="6" height="3" viewBox="0 0 6 3"><path d="M0 3L3 0L6 3Z" fill="#000"/></svg><div class="a rb" style="left:494px;top:174px;width:14px;height:8px;"></div><svg class="a" style="left:498px;top:177px;" width="6" height="3" viewBox="0 0 6 3"><path d="M0 0L6 0L3 3Z" fill="#000"/></svg><div class="t" style="left:352px;top:187px;letter-spacing:-0.37px">Max.Posiz.Armat.Correnti</div><div class="a sk" style="left:472px;top:184px;width:36px;height:19px;background:#fff"></div><div class="t" style="left:475px;top:187px;">1</div><div class="a rb" style="left:510px;top:169px;width:76px;height:34px;"></div><div class="t" style="left:518px;top:172px;letter-spacing:-0.3px">Usa posiz. in</div><div class="t" style="left:516px;top:185px;letter-spacing:-0.3px">compressione</div><svg class="a" style="left:548px;top:205px;" width="28" height="42" viewBox="0 0 28 42"><path d="M4.5 0.5H23.5V41.5H4.5Z" fill="#fff" stroke="#000"/><path d="M0.5 4H4.5V10Z M27.5 4H23.5V10Z M0.5 17H4.5V23Z M27.5 17H23.5V23Z M0.5 30H4.5V36Z M27.5 30H23.5V36Z" fill="#808080" stroke="#000" stroke-width="0.8"/><circle cx="14" cy="7.5" r="5" fill="#C02010" stroke="#404040"/><circle cx="14" cy="21" r="5" fill="#808080" stroke="#404040"/><circle cx="14" cy="34" r="5" fill="#808080" stroke="#404040"/></svg><div class="t" style="left:362px;top:224px;letter-spacing:-0.1px;white-space:pre">x/d Pos</div><div class="t" style="left:437.5px;top:224px;letter-spacing:-0.3px">0.182726</div><div class="t" style="left:362px;top:240px;letter-spacing:-0.1px;white-space:pre">x/d Max  (3)</div><div class="t" style="left:437.5px;top:240px;letter-spacing:-0.3px">0.187923</div><div class="t" style="left:362px;top:256px;letter-spacing:-0.1px;white-space:pre">MR.Pos</div><div class="t" style="left:437.5px;top:256px;letter-spacing:-0.3px">22049.5 daNm</div><div class="t" style="left:362px;top:273px;letter-spacing:-0.1px;white-space:pre">MR.Max  (3)</div><div class="t" style="left:437.5px;top:273px;letter-spacing:-0.3px">27546.9 daNm</div><div class="t" style="left:362px;top:287px;letter-spacing:-0.1px;white-space:pre">Mom.Max</div><div class="t" style="left:437.5px;top:287px;letter-spacing:-0.3px">24786.5 daNm</div><div class="a rb" style="left:549px;top:250px;width:22px;height:22px;"></div><div class="a rb" style="left:571px;top:250px;width:23px;height:22px;"></div><div class="a rb" style="left:549px;top:272px;width:22px;height:18px;"></div><div class="a rb" style="left:571px;top:272px;width:23px;height:18px;"></div><svg class="a" style="left:551px;top:252px;" width="18" height="18" viewBox="0 0 18 18"><path d="M9 1L17 16H1Z" fill="#FFF000" stroke="#404000"/><rect x="8" y="6" width="2" height="6" fill="#000"/><rect x="8" y="13" width="2" height="2" fill="#000"/></svg><svg class="a" style="left:573px;top:252px;" width="19" height="18" viewBox="0 0 19 18"><circle cx="9.5" cy="9" r="8" fill="#B01010" stroke="#600"/><rect x="8.5" y="3" width="2.2" height="8" fill="#fff"/><rect x="8.5" y="12.5" width="2.2" height="2" fill="#fff"/></svg><div class="t" style="left:552px;top:275px;font-size:11px;letter-spacing:0.3px">&gt;=</div><div class="t" style="left:575px;top:275px;font-size:11px;letter-spacing:0.3px">&lt;=</div><svg class="a" style="left:369.5px;top:303.5px;" width="12" height="12" viewBox="0 0 12 12"><path d="M1 9A5.5 5.5 0 0 1 9 1" fill="none" stroke="#808080" stroke-width="1"/><path d="M2 9.5A4.5 4.5 0 0 1 9.5 2" fill="none" stroke="#404040"/><path d="M11 3A5.5 5.5 0 0 1 3 11" fill="none" stroke="#fff"/><circle cx="6" cy="6" r="4" fill="#D4D0C8"/></svg><div class="t" style="left:388px;top:303px;color:#A0A0A0;letter-spacing:-0.3px">T.A.</div><svg class="a" style="left:369.5px;top:319.5px;" width="12" height="12" viewBox="0 0 12 12"><path d="M1 9A5.5 5.5 0 0 1 9 1" fill="none" stroke="#808080" stroke-width="1"/><path d="M2 9.5A4.5 4.5 0 0 1 9.5 2" fill="none" stroke="#404040"/><path d="M11 3A5.5 5.5 0 0 1 3 11" fill="none" stroke="#fff"/><circle cx="6" cy="6" r="4" fill="#fff"/><circle cx="6" cy="6" r="1.8" fill="#000"/></svg><div class="t" style="left:388px;top:319px;letter-spacing:-0.3px">SLU</div><div class="a sk" style="left:415px;top:320px;width:12px;height:12px;background:#D4D0C8"></div><div class="t" style="left:432px;top:319px;color:#A0A0A0;letter-spacing:-0.45px">NoTrasl.M</div><svg class="a" style="left:369.5px;top:336px;" width="12" height="12" viewBox="0 0 12 12"><path d="M1 9A5.5 5.5 0 0 1 9 1" fill="none" stroke="#808080" stroke-width="1"/><path d="M2 9.5A4.5 4.5 0 0 1 9.5 2" fill="none" stroke="#404040"/><path d="M11 3A5.5 5.5 0 0 1 3 11" fill="none" stroke="#fff"/><circle cx="6" cy="6" r="4" fill="#fff"/></svg><div class="t" style="left:388px;top:336px;letter-spacing:-0.3px">SLE rara</div><svg class="a" style="left:369.5px;top:352px;" width="12" height="12" viewBox="0 0 12 12"><path d="M1 9A5.5 5.5 0 0 1 9 1" fill="none" stroke="#808080" stroke-width="1"/><path d="M2 9.5A4.5 4.5 0 0 1 9.5 2" fill="none" stroke="#404040"/><path d="M11 3A5.5 5.5 0 0 1 3 11" fill="none" stroke="#fff"/><circle cx="6" cy="6" r="4" fill="#fff"/></svg><div class="t" style="left:388px;top:352px;letter-spacing:-0.4px">SLE q.perm</div><div class="a sk" style="left:489px;top:304px;width:13px;height:13px;background:#fff"></div><div class="t" style="left:506px;top:303px;letter-spacing:-0.3px">Valori Numerici</div><div class="t" style="left:496px;top:319px;letter-spacing:-0.3px">Scala</div><div class="a rb" style="left:541px;top:320px;width:21px;height:15px;"></div><div class="t" style="left:545px;top:321px;">x2</div><div class="a rb" style="left:563px;top:320px;width:21px;height:15px;"></div><div class="t" style="left:568px;top:321px;">/2</div><div class="a" style="left:489px;top:335px;width:98px;height:16px;border:1px solid #000"></div><div class="a rb" style="left:490px;top:336px;width:96px;height:14px;"></div><div class="t" style="left:517px;top:337px;letter-spacing:-0.3px">Aggiorna</div><div class="a rb" style="left:489px;top:352px;width:98px;height:15px;"></div><div class="t" style="left:494px;top:353px;letter-spacing:-0.3px">Assegna posizione</div><div class="a" style="left:601px;top:127px;width:266px;height:266px;background:#fff;border:1px solid #000;box-shadow:0 0 0 1px #D4D0C8"></div><svg class="a" style="left:602px;top:128px;" width="264" height="264" viewBox="602 128 264 264"><rect x="607" y="140.5" width="13.5" height="217" fill="#80F4FF" stroke="#000" stroke-width="1"/><rect x="620.5" y="181.5" width="19.5" height="176" fill="#207A80" stroke="#000" stroke-width="1"/><rect x="640" y="225.5" width="209.5" height="132" fill="#F08040" stroke="#8A3020" stroke-width="1"/><path d="M607 357.5V160.5H614L625 213.7L639 216.8L650 262L667 268L684 277.5L690 283.7L715 286.8L740 294.6L743 295L753 303.8L760.4 306.3L770.5 314L803.4 319L828.7 326.6L836.3 335.4L845.2 336.7L849 357.5Z" fill="#FF0000" stroke="#C02810" stroke-width="2.5"/><path d="M607 355.5H849" stroke="#C02810" stroke-width="3"/><path d="M606.5 357.5V133M603.5 138L606.5 132.5L609.5 138" fill="none" stroke="#000" stroke-width="1"/><path d="M606.5 357.5H861M856 354.5L861.5 357.5L856 360.5" fill="none" stroke="#000" stroke-width="1"/></svg><div class="a" style="left:789px;top:140px;width:70px;height:13px;background:#D4D0C8"></div><div class="t" style="left:789px;top:141px;letter-spacing:-0.25px">27546.9 daNm</div><div class="a" style="left:789px;top:181px;width:70px;height:13px;background:#D4D0C8"></div><div class="t" style="left:789px;top:182px;letter-spacing:-0.25px">22049.5 daNm</div><div class="a" style="left:789px;top:225px;width:70px;height:13px;background:#D4D0C8"></div><div class="t" style="left:789px;top:226px;letter-spacing:-0.25px">16717.5 daNm</div><div class="a" style="left:607px;top:360px;width:91px;height:12px;background:#D4D0C8"></div><div class="t" style="left:607px;top:360px;letter-spacing:-0.3px">L.Totale = 4372 cm</div><div class="a" style="left:607px;top:372px;width:107px;height:12px;background:#D4D0C8"></div><div class="t" style="left:607px;top:373px;letter-spacing:-0.3px">L.non verificata = 0 cm</div></body></html>
